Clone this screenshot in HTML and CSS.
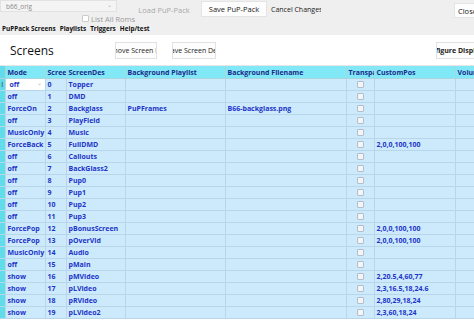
FILE: index.html
```html
<!DOCTYPE html>
<html>
<head>
<meta charset="utf-8">
<link rel="stylesheet" href="styles.css">
</head>
<body>
<div class="app">
  <div class="top">
    <div class="row-a">
      <div class="combo"><span>b66_orig</span><span class="arrow">&#8964;</span></div>
      <div class="btn disabled load">Load PuP-Pack</div>
      <div class="btn save">Save PuP-Pack</div>
      <div class="btn cancel"><span>Cancel Changes</span></div>
      <div class="spacer"></div>
      <div class="btn close">Close</div>
    </div>
    <div class="row-b"><span class="cb dis"></span><span class="lbl">List All Roms</span></div>
    <div class="tabs">
      <span class="tab">PuPPack Screens</span>
      <span class="tab">Playlists</span>
      <span class="tab">Triggers</span>
      <span class="tab">Help/test</span>
    </div>
  </div>
  <div class="panel">
    <div class="title">Screens</div>
    <div class="btn pbtn b1"><span>Remove Screen Item</span></div>
    <div class="btn pbtn b2"><span>Save Screen Defaults</span></div>
    <div class="spacer"></div>
    <div class="btn pbtn b3"><span>Configure Display</span></div>
  </div>
  <div class="gridwrap">
    <table class="grid">
      <colgroup>
        <col class="c0"><col class="c1"><col class="c2"><col class="c3"><col class="c4"><col class="c5"><col class="c6"><col class="c7"><col class="c8">
      </colgroup>
      <thead>
        <tr><th class="rh"></th><th>Mode</th><th>Screen</th><th>ScreenDes</th><th>Background Playlist</th><th>Background Filename</th><th>Transparent</th><th>CustomPos</th><th>Volume</th></tr>
      </thead>
      <tbody>
        <tr><td class="rh">I</td><td class="edit"><div class="ecombo"><span>off</span><span class="earrow">&#8964;</span></div></td><td>0</td><td>Topper</td><td></td><td></td><td class="ck"><span class="cb"></span></td><td></td><td></td></tr>
        <tr><td class="rh"></td><td>off</td><td>1</td><td>DMD</td><td></td><td></td><td class="ck"><span class="cb"></span></td><td></td><td></td></tr>
        <tr><td class="rh"></td><td>ForceOn</td><td>2</td><td>Backglass</td><td>PuPFrames</td><td>B66-backglass.png</td><td class="ck"><span class="cb"></span></td><td></td><td></td></tr>
        <tr><td class="rh"></td><td>off</td><td>3</td><td>PlayField</td><td></td><td></td><td class="ck"><span class="cb"></span></td><td></td><td></td></tr>
        <tr><td class="rh"></td><td>MusicOnly</td><td>4</td><td>Music</td><td></td><td></td><td class="ck"><span class="cb"></span></td><td></td><td></td></tr>
        <tr><td class="rh"></td><td>ForceBack</td><td>5</td><td>FullDMD</td><td></td><td></td><td class="ck"><span class="cb"></span></td><td>2,0,0,100,100</td><td></td></tr>
        <tr><td class="rh"></td><td>off</td><td>6</td><td>Callouts</td><td></td><td></td><td class="ck"><span class="cb"></span></td><td></td><td></td></tr>
        <tr><td class="rh"></td><td>off</td><td>7</td><td>BackGlass2</td><td></td><td></td><td class="ck"><span class="cb"></span></td><td></td><td></td></tr>
        <tr><td class="rh"></td><td>off</td><td>8</td><td>Pup0</td><td></td><td></td><td class="ck"><span class="cb"></span></td><td></td><td></td></tr>
        <tr><td class="rh"></td><td>off</td><td>9</td><td>Pup1</td><td></td><td></td><td class="ck"><span class="cb"></span></td><td></td><td></td></tr>
        <tr><td class="rh"></td><td>off</td><td>10</td><td>Pup2</td><td></td><td></td><td class="ck"><span class="cb"></span></td><td></td><td></td></tr>
        <tr><td class="rh"></td><td>off</td><td>11</td><td>Pup3</td><td></td><td></td><td class="ck"><span class="cb"></span></td><td></td><td></td></tr>
        <tr><td class="rh"></td><td>ForcePop</td><td>12</td><td>pBonusScreen</td><td></td><td></td><td class="ck"><span class="cb"></span></td><td>2,0,0,100,100</td><td></td></tr>
        <tr><td class="rh"></td><td>ForcePop</td><td>13</td><td>pOverVid</td><td></td><td></td><td class="ck"><span class="cb"></span></td><td>2,0,0,100,100</td><td></td></tr>
        <tr><td class="rh"></td><td>MusicOnly</td><td>14</td><td>Audio</td><td></td><td></td><td class="ck"><span class="cb"></span></td><td></td><td></td></tr>
        <tr><td class="rh"></td><td>off</td><td>15</td><td>pMain</td><td></td><td></td><td class="ck"><span class="cb"></span></td><td></td><td></td></tr>
        <tr><td class="rh"></td><td>show</td><td>16</td><td>pMVideo</td><td></td><td></td><td class="ck"><span class="cb"></span></td><td>2,20.5,4,60,77</td><td></td></tr>
        <tr><td class="rh"></td><td>show</td><td>17</td><td>pLVideo</td><td></td><td></td><td class="ck"><span class="cb"></span></td><td>2,3,16.5,18,24.6</td><td></td></tr>
        <tr><td class="rh"></td><td>show</td><td>18</td><td>pRVideo</td><td></td><td></td><td class="ck"><span class="cb"></span></td><td>2,80,29,18,24</td><td></td></tr>
        <tr><td class="rh"></td><td>show</td><td>19</td><td>pLVideo2</td><td></td><td></td><td class="ck"><span class="cb"></span></td><td>2,3,60,18,24</td><td></td></tr>
      </tbody>
    </table>
  </div>
</div>
</body>
</html>
```

FILE: styles.css
```css
html, body {
  margin: 0;
  padding: 0;
  background: #ffffff;
}
body {
  font-family: "Open Sans", "Noto Sans", sans-serif;
  width: 474px;
  height: 321px;
  overflow: hidden;
}
.app {
  width: 474px;
}
.top {
  background: #efefef;
  height: 35px;
}
.row-a {
  display: flex;
  align-items: flex-start;
  height: 15px;
}
.combo {
  width: 117px;
  height: 12px;
  box-sizing: border-box;
  border: 1px solid #e2e2e2;
  background: #f4f4f4;
  font-size: 6.5px;
  color: #8a8a8a;
  display: flex;
  align-items: center;
  justify-content: space-between;
  padding: 0 4px 0 5px;
}
.arrow {
  font-size: 6px;
  color: #b0b0b0;
  line-height: 1;
  margin-top: -3px;
}
.btn {
  box-sizing: border-box;
  font-size: 7.5px;
  color: #222;
  display: flex;
  align-items: center;
  justify-content: center;
  white-space: nowrap;
  overflow: hidden;
}
.btn span {
  flex-shrink: 0;
}
.load {
  margin-left: 18px;
  width: 58px;
  height: 17px;
  color: #a8a8a8;
  margin-top: 1px;
}
.save {
  margin-left: 8px;
  width: 66px;
  height: 16px;
  background: #fdfdfd;
  border: 1px solid #e4e4e4;
  margin-top: 1px;
}
.cancel {
  margin-left: 3px;
  width: 51px;
  height: 16px;
  margin-top: 1px;
  justify-content: flex-start;
  font-size: 7px;
}
.cancel span {
  margin-left: 1px;
}
.close {
  width: 20px;
  height: 15px;
  margin-top: 3px;
  justify-content: flex-start;
  padding-left: 3px;
  background: #fdfdfd;
  border: 1px solid #e4e4e4;
  border-right: none;
}
.spacer {
  flex: 1;
}
.row-b {
  display: flex;
  align-items: center;
  margin-left: 82px;
  height: 9px;
  margin-top: -1px;
}
.cb {
  display: inline-block;
  width: 5px;
  height: 5px;
  border: 1px solid #aaa;
  border-radius: 1px;
  background: #fff;
  box-sizing: content-box;
}
.cb.dis {
  border-color: #ccc;
}
.lbl {
  font-size: 7.5px;
  color: #9a9a9a;
  margin-left: 2px;
}
.tabs {
  display: flex;
  gap: 4px;
  padding-left: 2px;
  height: 11px;
  align-items: center;
}
.tab {
  font-size: 6.4px;
  font-weight: 700;
  color: #111;
}
.panel {
  height: 30px;
  display: flex;
  align-items: center;
  background: #ffffff;
  border-bottom: 1px solid #e6e6e6;
}
.title {
  font-size: 12px;
  color: #111;
  margin-left: 10px;
  width: 105px;
}
.pbtn {
  height: 17px;
  background: #fdfdfd;
  border: 1px solid #e2e2e2;
  font-size: 7px;
  justify-content: flex-start;
}
.b1 { width: 42px; }
.b1 span { margin-left: -13px; }
.b2 { width: 44px; margin-left: 15px; }
.b2 span { margin-left: -6px; }
.b3 {
  width: 38px;
  font-weight: 700;
  border-right: none;
}
.b3 span {
  margin-left: -15px;
}
.gridwrap {
  width: 474px;
  overflow: hidden;
}
.grid {
  border-collapse: collapse;
  table-layout: fixed;
  width: 500px;
  font-size: 7px;
  font-weight: 700;
  color: #1c34c8;
}
.c0 { width: 5px; }
.c1 { width: 40px; }
.c2 { width: 21px; }
.c3 { width: 59px; }
.c4 { width: 100px; }
.c5 { width: 121px; }
.c6 { width: 28px; }
.c7 { width: 81px; }
.c8 { width: 45px; }
.grid th {
  background: #80e8f6;
  color: #1e2a8c;
  height: 12px;
  padding: 0 0 0 2px;
  text-align: left;
  border: 1px solid #a9d6de;
  border-top: none;
  white-space: nowrap;
  overflow: hidden;
  font-weight: 700;
}
.grid td {
  background: #cdeafc;
  height: 11px;
  padding: 0 0 0 2px;
  border: 1px solid #b7d6ea;
  white-space: nowrap;
  overflow: hidden;
  line-height: 10px;
}
.grid .rh {
  background: #60dceb;
  padding: 0;
  border-left: none;
  color: #333;
  font-weight: 400;
  font-size: 7px;
  text-align: center;
}
.grid td.ck {
  text-align: center;
  padding: 0;
}
.grid td.ck .cb {
  vertical-align: middle;
  border-color: #b4bec8;
  background: #f2f6f9;
}
.grid td.edit {
  padding: 0;
  background: #ffffff;
}
.ecombo {
  display: flex;
  justify-content: space-between;
  padding: 0 3px 0 4px;
}
.earrow {
  color: #aaa;
  font-weight: 400;
  font-size: 6px;
  margin-top: -2px;
}
```
